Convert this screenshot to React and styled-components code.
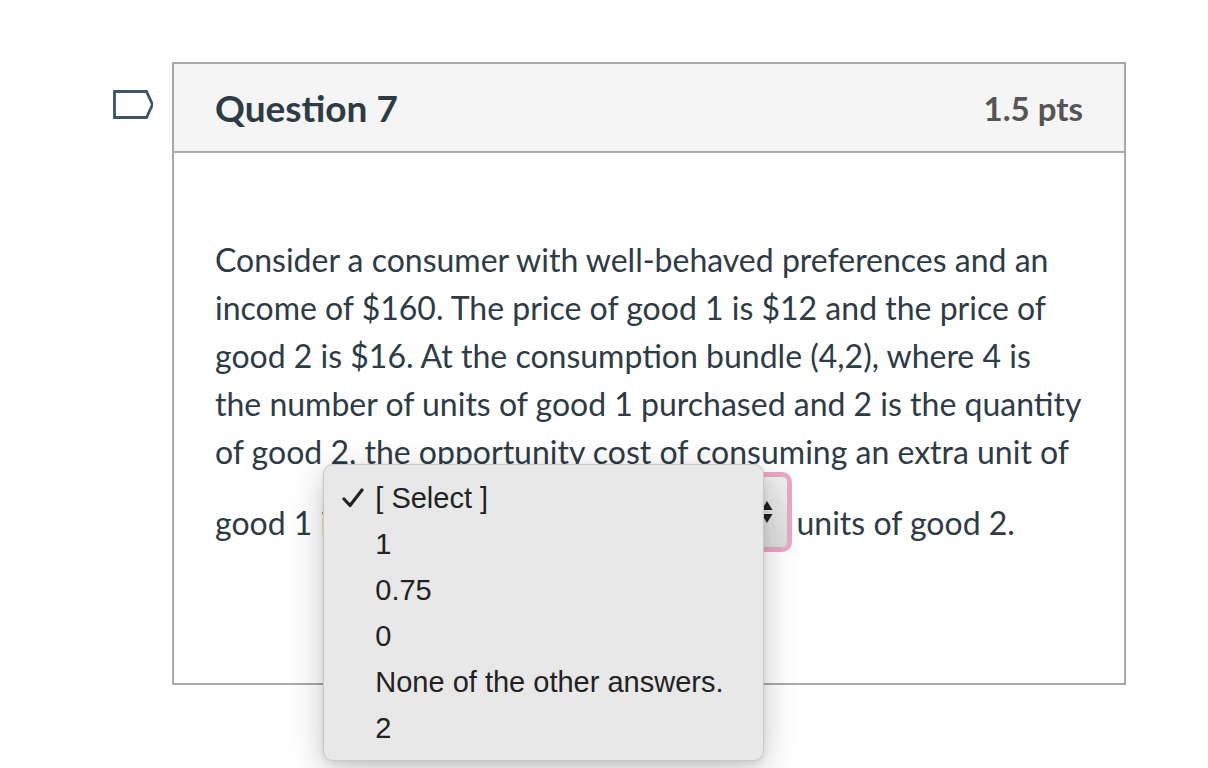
import styled, { createGlobalStyle } from 'styled-components';

const GlobalStyle = createGlobalStyle`
  html, body {
    margin: 0;
    padding: 0;
    background: #ffffff;
  }
  body {
    min-height: 768px;
    font-family: Lato, "Open Sans", sans-serif;
  }
`;

const options = ['[ Select ]', '1', '0.75', '0', 'None of the other answers.', '2'];

const App = () => {
  return (
    <>
      <GlobalStyle />
      <Page>
        <Marker>
          <svg width="44" height="32" viewBox="0 0 44 32">
            <path d="M5.5 3.5 H37.5 L43.5 16.5 L37.5 29.5 H5.5 Z" fill="none" stroke="#3d5568" strokeWidth="2.8" strokeLinejoin="miter" />
          </svg>
        </Marker>
        <Card>
          <Header>
            <Title>Question 7</Title>
            <Points>1.5 pts</Points>
          </Header>
          <Body>
            <Text>
              Consider a consumer with well-behaved preferences and an income of $160. The price of good 1 is $12 and the price of good 2 is $16. At the consumption bundle (4,2), where 4 is the number of units of good 1 purchased and 2 is the quantity of good 2, the opportunity cost of consuming an extra unit of good 1 is{' '}
              <SelectWrap>
                <FakeSelect>
                  <span>[ Select ]</span>
                  <Arrows>
                    <svg width="12" height="24" viewBox="0 0 12 24">
                      <path d="M6 1 L11.5 10 H0.5 Z" fill="#222" />
                      <path d="M6 23 L11.5 14 H0.5 Z" fill="#222" />
                    </svg>
                  </Arrows>
                </FakeSelect>
                <Popup>
                  {options.map((o, i) => (
                    <Option key={o}>
                      <Check>
                        {i === 0 && (
                          <svg width="22" height="20" viewBox="0 0 22 20">
                            <path d="M2 11 L8 17.5 L20 2" fill="none" stroke="#222" strokeWidth="3.2" strokeLinecap="round" strokeLinejoin="round" />
                          </svg>
                        )}
                      </Check>
                      {o}
                    </Option>
                  ))}
                </Popup>
              </SelectWrap>{' '}
              units of good 2.
            </Text>
          </Body>
        </Card>
      </Page>
    </>
  );
};

export default App;

const Page = styled.div`
  display: flex;
  align-items: flex-start;
  padding: 62px 0 0 109px;
`;

const Marker = styled.div`
  width: 63px;
  padding-top: 26px;
  svg {
    display: block;
  }
`;

const Card = styled.div`
  width: 950px;
  border: 2px solid #a9a9a9;
`;

const Header = styled.div`
  height: 87px;
  background: #f5f5f5;
  border-bottom: 2px solid #a9a9a9;
  display: flex;
  align-items: center;
  justify-content: space-between;
  padding: 0 41px;
`;

const Title = styled.h2`
  margin: 0;
  font-size: 37px;
  font-weight: 700;
  color: #2d3b45;
`;

const Points = styled.div`
  font-size: 33px;
  font-weight: 700;
  color: #555555;
`;

const Body = styled.div`
  padding: 83px 41px 135px;
`;

const Text = styled.div`
  font-size: 32px;
  line-height: 48px;
  color: #2d3b45;
`;

const SelectWrap = styled.span`
  position: relative;
  display: inline-block;
  vertical-align: 15px;
`;

const FakeSelect = styled.span`
  display: flex;
  align-items: center;
  justify-content: space-between;
  box-sizing: border-box;
  width: 438px;
  height: 72px;
  padding: 0 14px 0 32px;
  border: 1px solid #bdbdbd;
  border-radius: 6px;
  background: linear-gradient(#f0f0f0, #dddddd);
  box-shadow: 0 0 0 4px #f2a2c6;
  font-family: "Liberation Sans", Arial, sans-serif;
  font-size: 24px;
  color: #222;
`;

const Arrows = styled.span`
  display: flex;
  align-items: center;
`;

const Popup = styled.div`
  position: absolute;
  left: -27px;
  top: -12px;
  width: 441px;
  box-sizing: border-box;
  padding: 10px 0 9px;
  background: #e8e8e8;
  border: 1px solid #c8c8c8;
  border-radius: 10px;
  box-shadow: 0 10px 34px rgba(0, 0, 0, 0.22), 0 2px 6px rgba(0, 0, 0, 0.08);
  font-family: "Liberation Sans", Arial, sans-serif;
  font-size: 29px;
  line-height: 46px;
  color: #222222;
  z-index: 2;
`;

const Option = styled.div`
  display: flex;
  align-items: center;
  white-space: nowrap;
`;

const Check = styled.span`
  width: 51px;
  padding-left: 18px;
  box-sizing: border-box;
  display: flex;
  align-items: center;
`;
